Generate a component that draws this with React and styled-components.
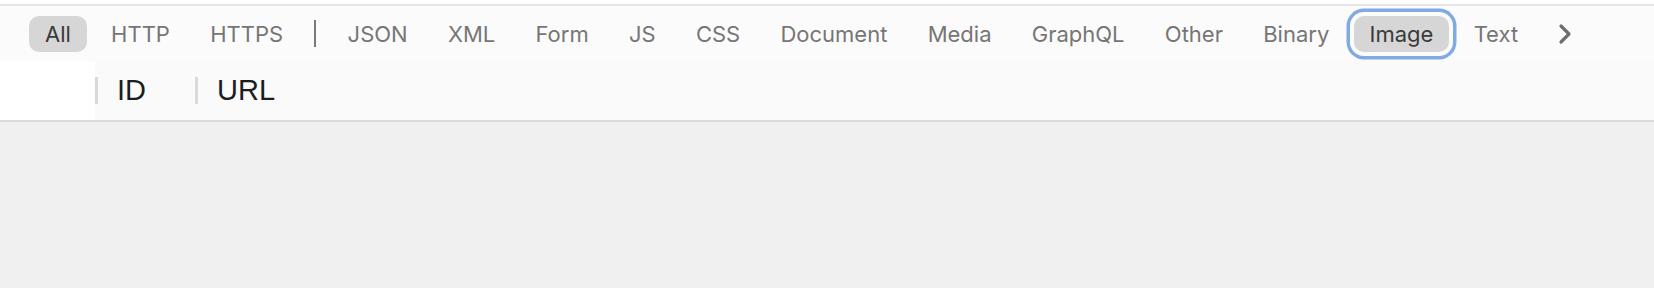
import styled, { createGlobalStyle } from "styled-components";

const GlobalStyle = createGlobalStyle`
  html, body {
    margin: 0;
    padding: 0;
    background: #f0f0f0;
  }
  body {
    font-family: "Inter", "Liberation Sans", sans-serif;
  }
`;

const Page = styled.div`
  width: 1654px;
  height: 288px;
  background: #f0f0f0;
`;

const TopStrip = styled.div`
  height: 4px;
  background: #fdfdfd;
  border-bottom: 2px solid #e5e5ea;
`;

const FilterBar = styled.div`
  height: 55px;
  display: flex;
  align-items: center;
  gap: 8.25px;
  padding-left: 29px;
  background: #fbfbfb;
`;

const Tab = styled.button`
  height: 36px;
  padding: 0 16px;
  border: none;
  border-radius: 10px;
  font-family: "Inter", "Liberation Sans", sans-serif;
  font-size: 22px;
  color: ${(p) => (p.$active ? "#3a3a3a" : "#767676")};
  background: ${(p) => (p.$active ? "#d6d6d6" : "transparent")};
  box-shadow: ${(p) =>
    p.$focused ? "0 0 0 4px #fbfbfb, 0 0 0 7.5px #80aae4" : "none"};
  cursor: pointer;
  white-space: nowrap;
`;

const Separator = styled.span`
  width: 2px;
  height: 27px;
  margin: 0 7px;
  background: #7a7a7a;
`;

const More = styled.button`
  margin-left: 11px;
  width: 24px;
  height: 36px;
  border: none;
  background: transparent;
  padding: 0;
  display: flex;
  align-items: center;
  justify-content: center;
  color: #6e6e6e;
  cursor: pointer;
`;

const HeaderRow = styled.div`
  height: 59px;
  display: flex;
  background: #fafafa;
  border-bottom: 2px solid #dcdcdc;
`;

const Gutter = styled.div`
  width: 95px;
  background: #ffffff;
`;

const HeaderCell = styled.div`
  width: ${(p) => p.$width || "auto"};
  display: flex;
  align-items: center;
  gap: 19px;
`;

const ColumnRule = styled.span`
  width: 3px;
  height: 27px;
  background: #dadada;
`;

const HeaderLabel = styled.span`
  font-family: "Liberation Sans", Arial, sans-serif;
  font-size: 29px;
  color: #1d1d1f;
`;

const tabs = [
  "All",
  "HTTP",
  "HTTPS",
  "|",
  "JSON",
  "XML",
  "Form",
  "JS",
  "CSS",
  "Document",
  "Media",
  "GraphQL",
  "Other",
  "Binary",
  "Image",
  "Text",
];

export default function App() {
  return (
    <Page>
      <GlobalStyle />
      <TopStrip />
      <FilterBar>
        {tabs.map((t, i) =>
          t === "|" ? (
            <Separator key={i} />
          ) : (
            <Tab
              key={t}
              $active={t === "All" || t === "Image"}
              $focused={t === "Image"}
            >
              {t}
            </Tab>
          )
        )}
        <More aria-label="More">
          <svg width="16" height="22" viewBox="0 0 16 22" fill="none">
            <path
              d="M4 3 L12 11 L4 19"
              stroke="currentColor"
              strokeWidth="3.2"
              strokeLinecap="round"
              strokeLinejoin="round"
            />
          </svg>
        </More>
      </FilterBar>
      <HeaderRow>
        <Gutter />
        <HeaderCell $width="100px">
          <ColumnRule />
          <HeaderLabel>ID</HeaderLabel>
        </HeaderCell>
        <HeaderCell>
          <ColumnRule />
          <HeaderLabel>URL</HeaderLabel>
        </HeaderCell>
      </HeaderRow>
    </Page>
  );
}
